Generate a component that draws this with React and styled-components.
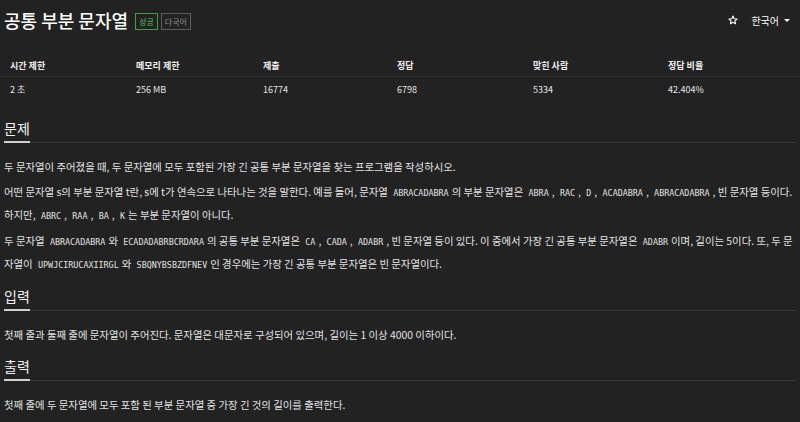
import React from 'react';
import styled, { createGlobalStyle } from 'styled-components';

const GlobalStyle = createGlobalStyle`
  html, body {
    margin: 0;
    padding: 0;
    background: #222222;
  }
  body {
    font-family: 'Noto Sans CJK KR', 'Noto Sans', sans-serif;
    color: #e6e6e6;
  }
`;

const Page = styled.div`
  width: 800px;
  height: 422px;
  overflow: hidden;
  background: #222222;
  padding: 0 4px;
  box-sizing: border-box;
`;

const TopBar = styled.div`
  display: flex;
  align-items: center;
  justify-content: space-between;
  height: 40px;
`;

const TitleWrap = styled.div`
  display: flex;
  align-items: center;
  gap: 3px;
`;

const Title = styled.h1`
  margin: 0 4px 0 0;
  font-size: 18px;
  font-weight: 500;
  color: #ffffff;
  line-height: 1;
`;

const Badge = styled.span`
  font-size: 8px;
  line-height: 15px;
  padding: 0 3px;
  border: 1px solid ${(p) => (p.$ok ? '#3f9f3f' : '#5c5c5c')};
  color: ${(p) => (p.$ok ? '#5ebd5e' : '#8a8a8a')};
  margin-top: 3px;
`;

const LangBox = styled.div`
  display: flex;
  align-items: center;
  gap: 13px;
  padding-right: 6px;
  font-size: 10px;
  color: #ffffff;
`;

const Caret = styled.span`
  width: 0;
  height: 0;
  border-left: 3px solid transparent;
  border-right: 3px solid transparent;
  border-top: 3px solid #ffffff;
  margin-left: -8px;
`;

const Table = styled.table`
  width: calc(100% + 8px);
  margin: 14px -4px 0;
  border-collapse: collapse;
  font-size: 9px;
  color: #e6e6e6;
`;

const Th = styled.th`
  text-align: left;
  font-weight: 700;
  padding: 5px 10px 4px;
  border-bottom: 1px solid #2e2e2e;
  color: #f0f0f0;
`;

const Td = styled.td`
  padding: 6px 10px 6px;
`;

const Section = styled.section`
  margin-top: ${(p) => p.$top || 0}px;
`;

const Heading = styled.h2`
  margin: 0;
  font-size: 14px;
  font-weight: 400;
  line-height: 21px;
  color: #f2f2f2;
  border-bottom: 1px solid #3a3a3a;
`;

const HeadLabel = styled.span`
  display: inline-block;
  padding-bottom: 2px;
  margin-bottom: -1px;
  border-bottom: 2px solid #d0d0d0;
`;

const Text = styled.p`
  margin: ${(p) => (p.$first ? '13px' : '2px')} 0 0;
  font-size: 10.4px;
  line-height: 22.5px;
  color: #e2e2e2;
`;

const Code = styled.code`
  font-family: 'DejaVu Sans Mono', 'Liberation Mono', monospace;
  font-size: 8.4px;
  padding: 0 3px;
  color: #e2e2e2;
`;

const Star = () => (
  <svg width="10" height="10" viewBox="0 0 24 24" fill="none" stroke="#fff" strokeWidth="2.6" strokeLinejoin="round">
    <polygon points="12,2.5 14.9,8.8 21.8,9.6 16.7,14.3 18.1,21.1 12,17.6 5.9,21.1 7.3,14.3 2.2,9.6 9.1,8.8" />
  </svg>
);

const stats = {
  head: ['시간 제한', '메모리 제한', '제출', '정답', '맞힌 사람', '정답 비율'],
  row: ['2 초', '256 MB', '16774', '6798', '5334', '42.404%'],
};

const widths = [126, 127, 134, 136, 135, 142];

export default function App() {
  return (
    <Page>
      <GlobalStyle />
      <TopBar>
        <TitleWrap>
          <Title>공통 부분 문자열</Title>
          <Badge $ok>성공</Badge>
          <Badge>다국어</Badge>
        </TitleWrap>
        <LangBox>
          <Star />
          <span>한국어</span>
          <Caret />
        </LangBox>
      </TopBar>

      <Table>
        <thead>
          <tr>
            {stats.head.map((h, i) => (
              <Th key={h} style={{ width: widths[i] - 20 }}>{h}</Th>
            ))}
          </tr>
        </thead>
        <tbody>
          <tr>
            {stats.row.map((v) => (
              <Td key={v}>{v}</Td>
            ))}
          </tr>
        </tbody>
      </Table>

      <Section $top={16}>
        <Heading><HeadLabel>문제</HeadLabel></Heading>
        <Text $first>
          두 문자열이 주어졌을 때, 두 문자열에 모두 포함된 가장 긴 공통 부분 문자열을 찾는 프로그램을 작성하시오.
        </Text>
        <Text>
          어떤 문자열 s의 부분 문자열 t란, s에 t가 연속으로 나타나는 것을 말한다. 예를 들어, 문자열 <Code>ABRACADABRA</Code>의 부분 문자열은 <Code>ABRA</Code>, <Code>RAC</Code>, <Code>D</Code>, <Code>ACADABRA</Code>, <Code>ABRACADABRA</Code>, 빈 문자열 등이다. 하지만, <Code>ABRC</Code>, <Code>RAA</Code>, <Code>BA</Code>, <Code>K</Code>는 부분 문자열이 아니다.
        </Text>
        <Text>
          두 문자열 <Code>ABRACADABRA</Code>와 <Code>ECADADABRBCRDARA</Code>의 공통 부분 문자열은 <Code>CA</Code>, <Code>CADA</Code>, <Code>ADABR</Code>, 빈 문자열 등이 있다. 이 중에서 가장 긴 공통 부분 문자열은 <Code>ADABR</Code>이며, 길이는 5이다. 또, 두 문자열이 <Code>UPWJCIRUCAXIIRGL</Code>와 <Code>SBQNYBSBZDFNEV</Code>인 경우에는 가장 긴 공통 부분 문자열은 빈 문자열이다.
        </Text>
      </Section>

      <Section $top={9}>
        <Heading><HeadLabel>입력</HeadLabel></Heading>
        <Text $first>
          첫째 줄과 둘째 줄에 문자열이 주어진다. 문자열은 대문자로 구성되어 있으며, 길이는 1 이상 4000 이하이다.
        </Text>
      </Section>

      <Section $top={10}>
        <Heading><HeadLabel>출력</HeadLabel></Heading>
        <Text $first>
          첫째 줄에 두 문자열에 모두 포함 된 부분 문자열 중 가장 긴 것의 길이를 출력한다.
        </Text>
      </Section>
    </Page>
  );
}
